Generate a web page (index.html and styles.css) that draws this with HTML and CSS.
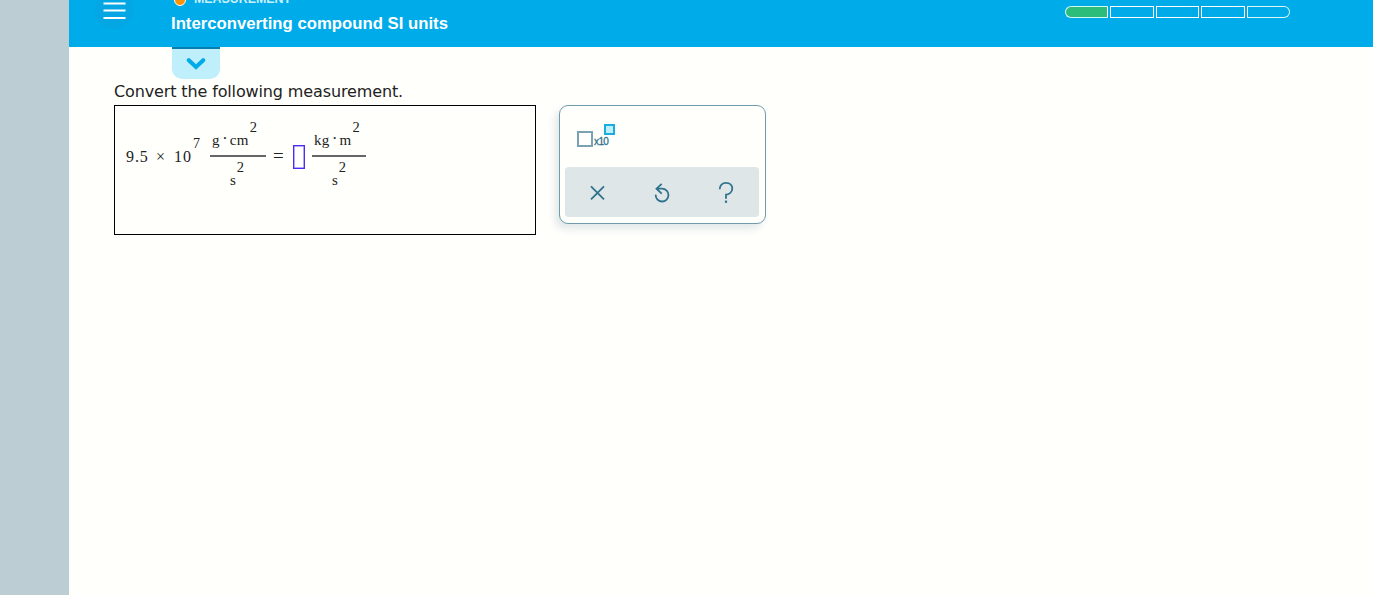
FILE: index.html
```html
<!DOCTYPE html>
<html lang="en">
<head>
<meta charset="utf-8">
<title>Interconverting compound SI units</title>
<link rel="stylesheet" href="styles.css">
</head>
<body>
<div class="page">
  <header class="topbar">
    <button class="menu" aria-label="Menu"><svg width="38" height="48" viewBox="0 0 38 48"><circle cx="19" cy="29" r="19" fill="#04a6e3"/><path d="M8.5 22.4h22M8.5 29.6h22M8.5 37h22" stroke="#fff" stroke-width="2"/></svg></button>
    <div class="heading">
      <div class="topic"><span class="dot"></span><svg width="110" height="14"><text x="0" y="11" textLength="97" lengthAdjust="spacingAndGlyphs">MEASUREMENT</text></svg></div>
      <h1><svg width="300" height="24"><text x="0" y="17" textLength="277" lengthAdjust="spacingAndGlyphs">Interconverting compound SI units</text></svg></h1>
    </div>
    <div class="progress"><i class="first"></i><i class="wide"></i><i></i><i class="wide"></i><i class="last"></i></div>
  </header>
  <main>
    <button class="expand" aria-label="Expand"><svg width="20" height="12" viewBox="0 0 20 12"><path d="M2.8 2.2L10 9l7.2-6.8" fill="none" stroke="#00abea" stroke-width="4" stroke-linecap="round"/></svg></button>
    <p class="prompt">Convert the following measurement.</p>
    <div class="work">
      <section class="equation">
        <span class="coef">9.5</span>
        <span class="times">×</span>
        <span class="ten">10</span>
        <span class="power">7</span>
        <div class="fraction source">
          <div class="num"><span>g</span><b>·</b><span>cm</span><sup>2</sup></div>
          <div class="den"><span>s</span><sup>2</sup></div>
        </div>
        <span class="equals">=</span>
        <span class="answer"></span>
        <div class="fraction result">
          <div class="num"><span>kg</span><b>·</b><span>m</span><sup>2</sup></div>
          <div class="den"><span>s</span><sup>2</sup></div>
        </div>
      </section>
      <aside class="tools">
        <div class="template"><span class="base"></span><span class="x10">x10</span><span class="exp"></span></div>
        <div class="actions">
          <svg width="64" height="50" viewBox="0 0 64 50"><path d="M26 19.3l13 13M39 19.3l-13 13" /></svg>
          <svg width="66" height="50" viewBox="0 0 66 50"><path d="M26.7 27.6a6.4 6.4 0 1 0 6.4-5.9H27.6M32.7 16.8l-5.2 4.9 5.2 4.9"/></svg>
          <svg width="64" height="50" viewBox="0 0 64 50"><path d="M24.7 22.2c0-4 2.7-6.3 6.3-6.3 3.7 0 6.3 2.4 6.3 5.7 0 4-3.8 6-6.3 6v4.1"/><rect x="29.9" y="33.6" width="2.2" height="2.2" fill="#2e728d"/></svg>
        </div>
      </aside>
    </div>
  </main>
</div>
</body>
</html>
```
FILE: styles.css
```css
* { box-sizing: border-box; }
html, body { height: 100%; }
body { margin: 0; background: #bccdd4; overflow: hidden; }
button { padding: 0; border: 0; background: none; display: block; }
svg { display: block; }
.page { margin-left: 69px; height: 100%; background: #fffffc; }
.topbar { height: 47px; background: #00abea; display: flex; align-items: flex-start; overflow: hidden; }
.menu { margin: -19px 0 0 26px; height: 48px; }
.heading { margin-left: 38px; }
.topic { display: flex; height: 14px; margin: -8px 0 0 3px; }
.topic text { font: bold 12px "Liberation Sans", sans-serif; fill: #c9f1fc; }
.dot { width: 12px; height: 12px; margin: 2px 8px 0 0; border: 1px solid #fff; border-radius: 50%; background: #ff9200; }
h1 { margin: 6px 0 0; height: 24px; }
h1 text { font: bold 17px "Liberation Sans", sans-serif; fill: #fff; }
.progress { display: flex; gap: 2px; margin: 6px 83px 0 auto; }
.progress i { width: 43px; height: 12px; border: 1px solid #fff; }
.progress .wide { width: 44px; }
.progress .first { background: #2bbd79; border-radius: 6px 0 0 6px; border-color: #d9f7f5; border-right-color: #fff; }
.progress .last { border-radius: 0 6px 6px 0; border-color: #d9f7f5; border-left-color: #fff; }
main { padding-left: 45px; }
.expand { margin-left: 58px; width: 48px; height: 32px; border-top: 2px solid #0380b0; border-radius: 0 0 10px 10px; background: #bfeffa; display: flex; align-items: center; justify-content: center; }
.prompt { margin: 3px 0 0; height: 23px; font: 16px/20px "DejaVu Sans", sans-serif; letter-spacing: -.13px; color: #222; }
.work { display: flex; align-items: flex-start; gap: 23px; }
.equation { width: 422px; height: 130px; border: 1px solid #000; display: flex; align-items: flex-start; padding-left: 11px; font: 16px/16px "Liberation Serif", serif; color: #222; }
.coef { width: 30px; margin-top: 43px; letter-spacing: .9px; }
.times { width: 18px; margin-top: 43px; }
.ten { width: 19px; margin-top: 43px; letter-spacing: .9px; }
.power { width: 17px; margin-top: 30px; font-size: 14px; }
.fraction { margin-top: 14px; }
.num { display: flex; height: 37px; border-bottom: 2px solid #666; align-items: flex-start; }
.num span { margin-top: 12px; font-size: 15px; letter-spacing: .3px; }
.num b { margin-top: 11px; width: 10px; text-align: center; font-weight: normal; }
.fraction sup { font-size: 14.5px; line-height: 16px; vertical-align: 0; margin-top: -1px; }
.source { width: 56px; }
.source .num { padding-left: 2px; }
.source .num sup { margin-left: 1px; }
.den { display: flex; padding-left: 20px; }
.den span { margin-top: 15px; font-size: 15px; }
.fraction .den sup { margin: 2px 0 0 1px; }
.equals { margin: 42px 0 0 7px; width: 20px; font-size: 19px; }
.answer { width: 12px; height: 24px; margin-top: 39px; border: 1px solid #4a2cf2; box-shadow: inset 0 0 0 .5px #6a53ff; }
.result { width: 54px; margin-left: 7px; }
.result .num { padding-left: 2px; }
.result .num sup { margin-left: 1px; }
.tools { width: 207px; height: 119px; padding: 0 5px; border: 1px solid #6f9bad; border-radius: 9px; background: #fffffc; box-shadow: -4px 5px 7px rgba(60,110,130,.15); }
.template { height: 61px; display: flex; align-items: flex-start; padding-left: 12px; }
.base { width: 16px; height: 16px; margin-top: 25px; border: 2px solid #7ba2b2; background: #fffffc; }
.x10 { width: 11px; margin: 30px -1px 0 1px; width: 11px; font: 10px/12px "Liberation Sans", sans-serif; letter-spacing: -.6px; color: #2e728d; -webkit-text-stroke: .3px #2e728d; }
.exp { width: 11px; height: 11px; margin-top: 18px; border: 2px solid #1aade0; background: #bfeffa; }
.actions { display: flex; width: 194px; height: 50px; border-radius: 4px; background: #dee6e8; }
.actions path { fill: none; stroke: #2e728d; stroke-width: 1.8; }
```
